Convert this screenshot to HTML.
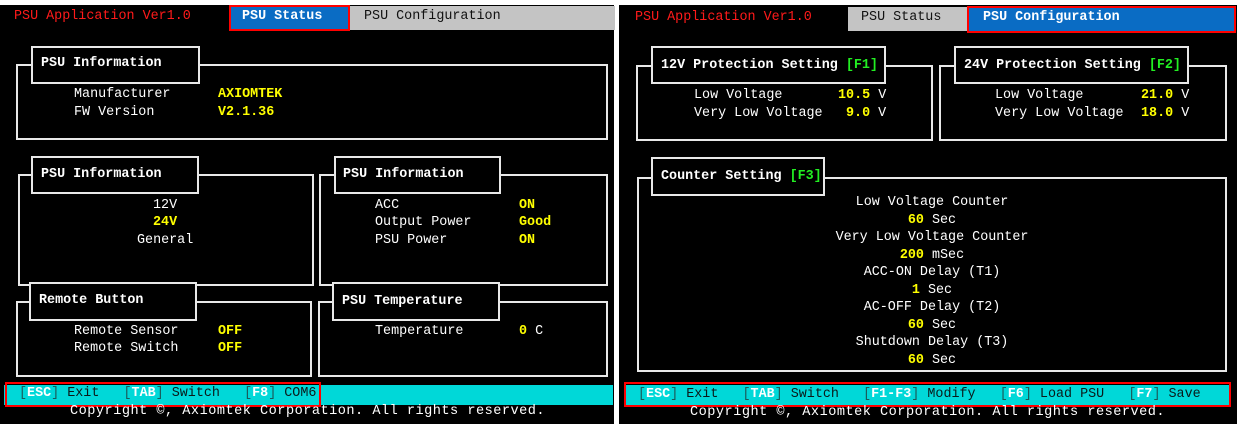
<!DOCTYPE html>
<html><head><meta charset="utf-8"><style>
*{margin:0;padding:0;box-sizing:border-box}
body{width:1237px;height:428px;background:#fff;position:relative;overflow:hidden;font-family:"Liberation Mono",monospace;font-size:13.4px;color:#fff}
.p{position:absolute;background:#000}
.t{position:absolute;white-space:pre;line-height:16px}
.b{font-weight:bold}
.y{color:#ffff00;font-weight:bold}
.g{color:#22ee22}
.r{color:#ff1a1a}
.box{position:absolute;border:2px solid #e8e8e8}
.tb{position:absolute;border:2px solid #e8e8e8;background:#000}
.bar{position:absolute;background:#00d8d8;color:#0a1a1a}
.k{color:#fff;font-weight:bold}
.br{color:#1a5a5a}
.cp{letter-spacing:0.48px;font-size:13.6px}
</style></head><body>
<!-- LEFT PANEL -->
<div class="p" style="left:0;top:5px;width:614px;height:419px"></div>
<div class="t r" style="left:14px;top:9px">PSU Application Ver1.0</div>
<div style="position:absolute;left:349px;top:6px;width:266px;height:24px;background:#c4c4c4"></div>
<div style="position:absolute;left:229px;top:5px;width:121px;height:26px;background:#0a6cc4;border:2px solid #f00"></div>
<div class="t b" style="left:242px;top:9px">PSU Status</div>
<div class="t" style="left:364px;top:9px;color:#111">PSU Configuration</div>

<div class="box" style="left:16px;top:64px;width:592px;height:76px"></div>
<div class="tb" style="left:31px;top:46px;width:169px;height:38px"></div>
<div class="t b" style="left:41px;top:56px">PSU Information</div>
<div class="t" style="left:74px;top:87px">Manufacturer</div>
<div class="t y" style="left:218px;top:87px">AXIOMTEK</div>
<div class="t" style="left:74px;top:105px">FW Version</div>
<div class="t y" style="left:218px;top:105px">V2.1.36</div>

<div class="box" style="left:18px;top:174px;width:296px;height:112px"></div>
<div class="tb" style="left:31px;top:156px;width:168px;height:38px"></div>
<div class="t b" style="left:41px;top:167px">PSU Information</div>
<div class="t" style="left:153px;top:198px">12V</div>
<div class="t y" style="left:153px;top:215px">24V</div>
<div class="t" style="left:137px;top:233px">General</div>

<div class="box" style="left:319px;top:174px;width:289px;height:112px"></div>
<div class="tb" style="left:334px;top:156px;width:167px;height:38px"></div>
<div class="t b" style="left:343px;top:167px">PSU Information</div>
<div class="t" style="left:375px;top:198px">ACC</div>
<div class="t y" style="left:519px;top:198px">ON</div>
<div class="t" style="left:375px;top:215px">Output Power</div>
<div class="t y" style="left:519px;top:215px">Good</div>
<div class="t" style="left:375px;top:233px">PSU Power</div>
<div class="t y" style="left:519px;top:233px">ON</div>

<div class="box" style="left:16px;top:301px;width:296px;height:76px"></div>
<div class="tb" style="left:29px;top:282px;width:168px;height:39px"></div>
<div class="t b" style="left:39px;top:293px">Remote Button</div>
<div class="t" style="left:74px;top:324px">Remote Sensor</div>
<div class="t y" style="left:218px;top:324px">OFF</div>
<div class="t" style="left:74px;top:341px">Remote Switch</div>
<div class="t y" style="left:218px;top:341px">OFF</div>

<div class="box" style="left:318px;top:301px;width:290px;height:76px"></div>
<div class="tb" style="left:332px;top:282px;width:168px;height:39px"></div>
<div class="t b" style="left:342px;top:294px">PSU Temperature</div>
<div class="t" style="left:375px;top:324px">Temperature</div>
<div class="t" style="left:519px;top:324px"><span class="y">0</span> C</div>

<div class="bar" style="left:4px;top:385px;width:609px;height:20px"></div>
<div style="position:absolute;left:5px;top:382px;width:316px;height:25px;border:2px solid #f00"></div>
<div class="t" style="left:19px;top:386px;color:#0a1a1a"><span class="br">[</span><span class="k">ESC</span><span class="br">]</span> Exit   <span class="br">[</span><span class="k">TAB</span><span class="br">]</span> Switch   <span class="br">[</span><span class="k">F8</span><span class="br">]</span> COM6</div>
<div class="t cp" style="left:70px;top:404px">Copyright ©, Axiomtek Corporation. All rights reserved.</div>

<!-- RIGHT PANEL -->
<div class="p" style="left:619px;top:5px;width:618px;height:419px"></div>
<div class="t r" style="left:635px;top:10px">PSU Application Ver1.0</div>
<div style="position:absolute;left:848px;top:7px;width:120px;height:24px;background:#c4c4c4"></div>
<div class="t" style="left:861px;top:10px;color:#111">PSU Status</div>
<div style="position:absolute;left:967px;top:6px;width:269px;height:27px;background:#0a6cc4;border:2px solid #f00"></div>
<div class="t b" style="left:983px;top:10px">PSU Configuration</div>

<div class="box" style="left:636px;top:65px;width:297px;height:76px"></div>
<div class="tb" style="left:651px;top:46px;width:235px;height:38px"></div>
<div class="t b" style="left:661px;top:58px">12V Protection Setting <span class="g">[F1]</span></div>
<div class="t" style="left:694px;top:88px">Low Voltage</div>
<div class="t" style="left:838px;top:88px"><span class="y">10.5</span> V</div>
<div class="t" style="left:694px;top:106px">Very Low Voltage</div>
<div class="t" style="left:846px;top:106px"><span class="y">9.0</span> V</div>

<div class="box" style="left:939px;top:65px;width:288px;height:76px"></div>
<div class="tb" style="left:954px;top:46px;width:235px;height:38px"></div>
<div class="t b" style="left:964px;top:58px">24V Protection Setting <span class="g">[F2]</span></div>
<div class="t" style="left:995px;top:88px">Low Voltage</div>
<div class="t" style="left:1141px;top:88px"><span class="y">21.0</span> V</div>
<div class="t" style="left:995px;top:106px">Very Low Voltage</div>
<div class="t" style="left:1141px;top:106px"><span class="y">18.0</span> V</div>

<div class="box" style="left:637px;top:177px;width:590px;height:195px"></div>
<div class="tb" style="left:651px;top:157px;width:174px;height:39px"></div>
<div class="t b" style="left:661px;top:169px">Counter Setting <span class="g">[F3]</span></div>
<div style="position:absolute;left:632px;top:194px;width:600px;text-align:center;line-height:17.5px;white-space:pre">Low Voltage Counter
<span class="y">60</span> Sec
Very Low Voltage Counter
<span class="y">200</span> mSec
ACC-ON Delay (T1)
<span class="y">1</span> Sec
AC-OFF Delay (T2)
<span class="y">60</span> Sec
Shutdown Delay (T3)
<span class="y">60</span> Sec</div>

<div class="bar" style="left:626px;top:385px;width:603px;height:20px"></div>
<div style="position:absolute;left:624px;top:382px;width:607px;height:25px;border:2px solid #f00"></div>
<div class="t" style="left:638px;top:387px;color:#0a1a1a"><span class="br">[</span><span class="k">ESC</span><span class="br">]</span> Exit   <span class="br">[</span><span class="k">TAB</span><span class="br">]</span> Switch   <span class="br">[</span><span class="k">F1-F3</span><span class="br">]</span> Modify   <span class="br">[</span><span class="k">F6</span><span class="br">]</span> Load PSU   <span class="br">[</span><span class="k">F7</span><span class="br">]</span> Save</div>
<div class="t cp" style="left:690px;top:405px">Copyright ©, Axiomtek Corporation. All rights reserved.</div>
</body></html>
